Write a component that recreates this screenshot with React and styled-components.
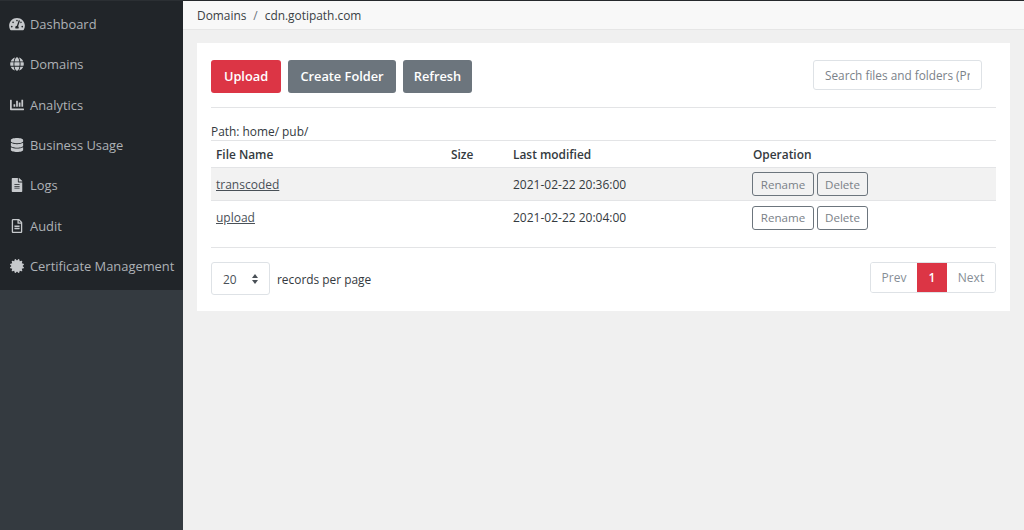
import React from "react";
import styled, { createGlobalStyle } from "styled-components";
import { FaTachometerAlt, FaGlobe, FaChartBar, FaDatabase, FaFileAlt, FaRegFileAlt, FaCertificate } from "react-icons/fa";

const Global = createGlobalStyle`
  html, body { margin: 0; padding: 0; }
  body {
    font-family: "Open Sans", "Liberation Sans", sans-serif;
    font-size: 12px;
    color: #343a40;
    background: #f0f0f0;
  }
  * { box-sizing: border-box; }
`;

const Page = styled.div`
  display: flex;
  width: 1024px;
  height: 530px;
  overflow: hidden;
`;

const Sidebar = styled.aside`
  width: 183px;
  flex: none;
  background: #343a40;
`;

const Nav = styled.nav`
  height: 290px;
  background: #212529;
  border-top: 1px solid #2b2f33;
  padding-top: 3px;
`;

const NavItem = styled.div`
  display: flex;
  align-items: center;
  height: 40.33px;
  padding-left: 9px;
  color: #aeb2b6;
  font-size: 12.9px;
  white-space: nowrap;
  svg {
    width: 16px;
    height: 14px;
    margin-right: 5px;
    flex: none;
    color: #c6c9cc;
  }
`;

const Main = styled.main`
  flex: 1;
  min-width: 0;
`;

const Breadcrumb = styled.div`
  display: flex;
  align-items: center;
  gap: 7px;
  height: 30px;
  padding: 0 14px 1px;
  background: #f8f8f8;
  border-top: 1px solid #26292c;
  border-bottom: 1px solid #e6e6e6;
  color: #3a3f44;
  font-size: 11.9px;
`;

const Slash = styled.span`
  color: #6c757d;
`;

const Card = styled.section`
  width: 813px;
  height: 268px;
  margin: 13px 0 0 14px;
  padding: 17px 14px 0;
  background: #fff;
`;

const Toolbar = styled.div`
  display: flex;
  align-items: flex-start;
  gap: 7px;
  height: 48px;
  border-bottom: 1px solid #e3e4e6;
`;

const Button = styled.button`
  width: ${p => p.$w}px;
  height: 33px;
  padding: 0 0 2px;
  border: none;
  border-radius: 3px;
  background: ${p => (p.$primary ? "#dc3545" : "#6c757d")};
  color: #fff;
  font: 600 12.8px "Open Sans", sans-serif;
`;

const Search = styled.input`
  width: 169px;
  height: 30px;
  margin-left: auto;
  margin-right: 14px;
  padding: 0 11px;
  border: 1px solid #dee2e6;
  border-radius: 3px;
  font: 11.8px "Open Sans", sans-serif;
  &::placeholder { color: #7b8289; opacity: 1; }
`;

const PathLine = styled.div`
  height: 32px;
  padding-top: 15px;
  line-height: 17px;
  font-size: 11.9px;
`;

const Table = styled.div`
  border-top: 1px solid #e3e4e6;
`;

const Row = styled.div`
  display: grid;
  grid-template-columns: 235px 62px 240px 1fr;
  align-items: center;
  height: ${p => (p.$head ? "27px" : "33px")};
  padding-left: 5px;
  background: ${p => (p.$striped ? "#f2f2f2" : "transparent")};
  border-bottom: 1px solid #e3e4e6;
  font-weight: ${p => (p.$head ? 600 : 400)};
  font-size: ${p => (p.$head ? "11.9px" : "12px")};
  ${p => p.$last && "border-bottom: none;"}
`;

const FileLink = styled.a`
  color: #495057;
  text-decoration: underline;
`;

const Operations = styled.div`
  display: flex;
  gap: 3px;
  margin-left: -1px;
`;

const OpButton = styled.button`
  width: ${p => p.$w}px;
  height: 24px;
  padding: 0;
  background: transparent;
  border: 1px solid #6c757d;
  border-radius: 3px;
  color: #7a8188;
  font: 11.6px "Open Sans", sans-serif;
`;

const Footer = styled.div`
  display: flex;
  align-items: flex-start;
  justify-content: space-between;
  margin-top: 13px;
  padding-top: 14px;
  border-top: 1px solid #e3e4e6;
`;

const PerPage = styled.div`
  display: flex;
  align-items: center;
  gap: 7px;
  font-size: 11.9px;
`;

const Select = styled.div`
  display: flex;
  align-items: center;
  justify-content: space-between;
  width: 59px;
  height: 33px;
  padding: 0 10px 0 11px;
  border: 1px solid #dee2e6;
  border-radius: 3px;
  color: #495057;
`;

const Pager = styled.div`
  display: flex;
  height: 31px;
  border: 1px solid #dee2e6;
  border-radius: 3px;
  overflow: hidden;
`;

const PageLink = styled.div`
  display: flex;
  align-items: center;
  justify-content: center;
  width: ${p => p.$w}px;
  background: ${p => (p.$active ? "#dc3545" : "#fff")};
  color: ${p => (p.$active ? "#fff" : "#868e96")};
  font-weight: ${p => (p.$active ? 600 : 400)};
`;

const items = [
  [FaTachometerAlt, "Dashboard"],
  [FaGlobe, "Domains"],
  [FaChartBar, "Analytics"],
  [FaDatabase, "Business Usage"],
  [FaFileAlt, "Logs"],
  [FaRegFileAlt, "Audit"],
  [FaCertificate, "Certificate Management"],
];

const files = [
  { name: "transcoded", date: "2021-02-22 20:36:00" },
  { name: "upload", date: "2021-02-22 20:04:00" },
];

export default function App() {
  return (
    <Page>
      <Global />
      <Sidebar>
        <Nav>
          {items.map(([Icon, label]) => (
            <NavItem key={label}><Icon />{label}</NavItem>
          ))}
        </Nav>
      </Sidebar>
      <Main>
        <Breadcrumb>
          <span>Domains</span><Slash>/</Slash><span>cdn.gotipath.com</span>
        </Breadcrumb>
        <Card>
          <Toolbar>
            <Button $primary $w={70}>Upload</Button>
            <Button $w={108}>Create Folder</Button>
            <Button $w={69}>Refresh</Button>
            <Search placeholder="Search files and folders (Press Enter)" />
          </Toolbar>
          <PathLine>Path: home/ pub/</PathLine>
          <Table>
            <Row $head>
              <span>File Name</span><span>Size</span><span>Last modified</span><span>Operation</span>
            </Row>
            {files.map((f, i) => (
              <Row key={f.name} $striped={i === 0} $last={i === files.length - 1}>
                <FileLink>{f.name}</FileLink>
                <span />
                <span>{f.date}</span>
                <Operations>
                  <OpButton $w={62}>Rename</OpButton>
                  <OpButton $w={51}>Delete</OpButton>
                </Operations>
              </Row>
            ))}
          </Table>
          <Footer>
            <PerPage>
              <Select>
                20
                <svg width="8" height="12" viewBox="0 0 8 12"><path d="M4 1l3 4H1zM4 11L1 7h6z" fill="#495057" /></svg>
              </Select>
              records per page
            </PerPage>
            <Pager>
              <PageLink $w={46}>Prev</PageLink>
              <PageLink $w={30} $active>1</PageLink>
              <PageLink $w={48}>Next</PageLink>
            </Pager>
          </Footer>
        </Card>
      </Main>
    </Page>
  );
}
